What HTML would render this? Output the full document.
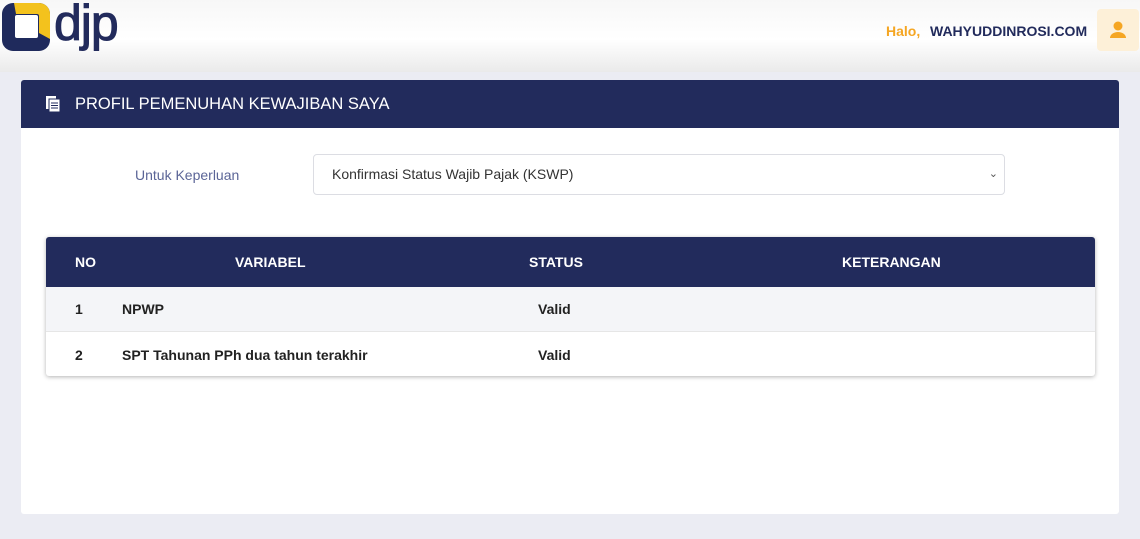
<!DOCTYPE html>
<html><head><style>
*{margin:0;padding:0;box-sizing:border-box}
body{width:1140px;height:539px;background:#ebecf3;font-family:"Liberation Sans",sans-serif;position:relative;overflow:hidden}
.top{position:absolute;left:0;top:0;width:1140px;height:72px;background:linear-gradient(#f7f7f7,#fff 55%,#eaeaea)}
.card{position:absolute;left:21px;top:80px;width:1098px;height:434px;background:#fff;border-radius:3px}
.ch{height:48px;background:#222b5c;border-radius:3px 3px 0 0;color:#fff;font-size:16.5px;line-height:48px;padding-left:54px;position:relative}
.lbl{position:absolute;left:114px;top:87px;color:#5b6597;font-size:14px}
.sel{position:absolute;left:292px;top:74px;width:692px;height:41px;border:1px solid #dcdde3;border-radius:4px;font-size:14px;color:#333;line-height:39px;padding-left:18px}
.tbl{position:absolute;left:25px;top:157px;width:1049px;height:139px;box-shadow:0 1px 4px rgba(0,0,0,.3);border-radius:3px;overflow:hidden;background:#fff}
.th{height:50px;background:#222b5c;color:#fff;font-weight:bold;font-size:14px;position:relative}
.row{height:45px;position:relative;font-size:14px;font-weight:bold;color:#222;border-bottom:1px solid #e6e6e6}
.th span,.row span{position:absolute;top:50%;transform:translateY(-50%)}
</style></head><body>
<div class="top"></div>
<svg style="position:absolute;left:2px;top:3px" width="48" height="48" viewBox="0 0 48 48">
<rect x="0" y="0" width="48" height="48" rx="11" fill="#1f2a5c"/>
<path d="M12 0H37a11 11 0 0 1 11 11V36L37 30V13a2 2 0 0 0-2-2H14Z" fill="#f3c21d"/>
<rect x="13" y="12" width="23" height="23" rx="2" fill="#fff"/>
</svg>
<div style="position:absolute;left:54px;top:-6px;font-size:50px;color:#222b5c;font-family:'Liberation Sans',sans-serif;letter-spacing:-1px;-webkit-text-stroke:1px #222b5c">djp</div>
<div style="position:absolute;left:886px;top:23px;font-size:14px;font-weight:bold;color:#f5a623">Halo,</div>
<div style="position:absolute;left:930px;top:23px;font-size:14px;font-weight:bold;color:#222b5c">WAHYUDDINROSI.COM</div>
<div style="position:absolute;left:1097px;top:9px;width:42px;height:42px;background:#fdf0d8;border-radius:4px">
<svg width="42" height="42" viewBox="0 0 42 42"><circle cx="21" cy="17" r="4.5" fill="#f5a623"/><path d="M13 29a8 6 0 0 1 16 0z" fill="#f5a623"/></svg></div>
<div class="card">
<div class="ch"><svg style="position:absolute;left:25px;top:16px" width="14" height="16" viewBox="0 0 14 16"><rect x="0" y="0" width="10" height="13" fill="#fff"/><rect x="3" y="3" width="11" height="13" fill="#fff" stroke="#222b5c" stroke-width="1"/><path d="M5 7h7M5 9.5h7M5 12h7" stroke="#222b5c"/></svg>PROFIL PEMENUHAN KEWAJIBAN SAYA</div>
<div class="lbl">Untuk Keperluan</div>
<div class="sel">Konfirmasi Status Wajib Pajak (KSWP)<span style="position:absolute;right:6px;top:0;font-size:11px;color:#555">&#8964;</span></div>
<div class="tbl">
<div class="th"><span style="left:29px">NO</span><span style="left:189px">VARIABEL</span><span style="left:483px">STATUS</span><span style="left:796px">KETERANGAN</span></div>
<div class="row" style="background:#f4f5f8"><span style="left:29px">1</span><span style="left:76px">NPWP</span><span style="left:492px">Valid</span></div>
<div class="row" style="border:none"><span style="left:29px">2</span><span style="left:76px">SPT Tahunan PPh dua tahun terakhir</span><span style="left:492px">Valid</span></div>
</div>
</div>
</body></html>
